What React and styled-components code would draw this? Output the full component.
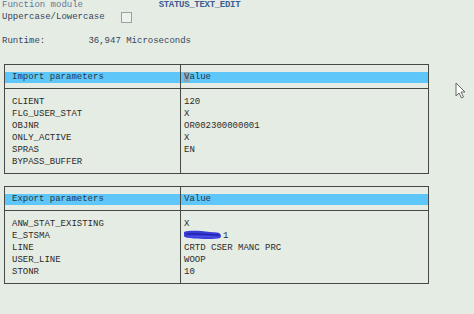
import React from 'react'
import styled, { createGlobalStyle } from 'styled-components'

const GlobalStyle = createGlobalStyle`
  html, body {
    margin: 0;
    padding: 0;
    background: #e5ece4;
  }
  body {
    width: 474px;
    height: 314px;
    overflow: hidden;
    font-family: "Liberation Mono", "Courier New", monospace;
    font-size: 9px;
    color: #2b2b2b;
  }
`

const importParams = [
  { name: 'CLIENT', value: '120' },
  { name: 'FLG_USER_STAT', value: 'X' },
  { name: 'OBJNR', value: 'OR002300000001' },
  { name: 'ONLY_ACTIVE', value: 'X' },
  { name: 'SPRAS', value: 'EN' },
  { name: 'BYPASS_BUFFER', value: '' },
]

const exportParams = [
  { name: 'ANW_STAT_EXISTING', value: 'X' },
  { name: 'E_STSMA', value: '1', hidden: true },
  { name: 'LINE', value: 'CRTD CSER MANC PRC' },
  { name: 'USER_LINE', value: 'WOOP' },
  { name: 'STONR', value: '10' },
]

// blue pen scribble hiding part of a value
function Scribble() {
  return (
    <svg width="39" height="10" viewBox="0 0 39 10" style={{ verticalAlign: '-2px' }}>
      <path d="M0 2 C6 0, 16 1, 26 2 L33 2.5 C37 3, 38 6, 36 8 C30 9.5, 18 9, 10 8.5 C5 8, 1 8, 0 6 Z" fill="#3a3ed8" />
      <path d="M2 4 C12 3, 22 5, 35 5" stroke="#2326a8" strokeWidth="1.4" fill="none" />
      <path d="M4 7 C14 6, 24 7, 33 7" stroke="#4d52ee" strokeWidth="1" fill="none" />
    </svg>
  )
}

function ParamTable({ title, rows, caret }) {
  return (
    <Table>
      <HeadRow>
        <HeadCell $first>
          <Band $first>{title}</Band>
        </HeadCell>
        <HeadCell>
          <Band>
            {caret ? <Caret>V</Caret> : 'V'}alue
          </Band>
        </HeadCell>
      </HeadRow>
      <Body>
        <Column $first>
          {rows.map((r) => (
            <Line key={r.name}>{r.name}</Line>
          ))}
        </Column>
        <Column>
          {rows.map((r) => (
            <Line key={r.name}>
              {r.hidden && <Scribble />}
              {r.value}
            </Line>
          ))}
        </Column>
      </Body>
    </Table>
  )
}

function Cursor() {
  return (
    <CursorMark width="12" height="17" viewBox="0 0 12 17">
      <path d="M1 1 L1 14 L4 11 L6.5 16 L8.5 15 L6 10 L10 10 Z" fill="#fff" stroke="#666" strokeWidth="1" strokeLinejoin="round" />
    </CursorMark>
  )
}

export default function App() {
  return (
    <Page>
      <GlobalStyle />
      <Header>
        <InfoRow>
          <Label $ch={29} $tone="#5f7898">Function module</Label>
          <ModuleName>STATUS_TEXT_EDIT</ModuleName>
        </InfoRow>
        <InfoRow>
          <Label $ch={22} $tone="#36445a">Uppercase/Lowercase</Label>
          <Check />
        </InfoRow>
        <InfoRow />
        <InfoRow>
          <Label $ch={16} $tone="#36445a">Runtime:</Label>
          <Value>36,947 Microseconds</Value>
        </InfoRow>
      </Header>
      <Tables>
        <ParamTable title="Import parameters" rows={importParams} caret />
        <ParamTable title="Export parameters" rows={exportParams} />
      </Tables>
      <Cursor />
    </Page>
  )
}

const Page = styled.div`
  position: relative;
  width: 474px;
  height: 314px;
  box-sizing: border-box;
  padding: 0 0 0 2px;
`

const Header = styled.div`
  margin-top: -1px;
  display: flex;
  flex-direction: column;
`

const InfoRow = styled.div`
  display: flex;
  align-items: center;
  height: 12px;
  line-height: 12px;
  white-space: pre;
`

const Label = styled.span`
  width: ${(p) => p.$ch}ch;
  flex: none;
  color: ${(p) => p.$tone};
`

const ModuleName = styled.span`
  color: #3d5c94;
  font-weight: bold;
  letter-spacing: -0.3px;
`

const Value = styled.span`
  color: #36445a;
`

const Check = styled.span`
  width: 9px;
  height: 9px;
  margin-top: 1px;
  border: 1px solid #9aa09a;
  background: #eef2ee;
  flex: none;
`

const Tables = styled.div`
  margin-top: 17px;
  margin-left: 2px;
  width: 425px;
  display: flex;
  flex-direction: column;
  gap: 12px;
`

const Table = styled.div`
  border: 1px solid #474947;
  display: flex;
  flex-direction: column;
`

const HeadRow = styled.div`
  display: grid;
  grid-template-columns: 176px 1fr;
  border-bottom: 1px solid #474947;
`

const HeadCell = styled.div`
  padding: 7px 0 5px;
  border-right: ${(p) => (p.$first ? '1px solid #474947' : 'none')};
`

const Band = styled.div`
  height: 11px;
  line-height: 11px;
  background: #5ec6f8;
  color: #263848;
  padding-left: ${(p) => (p.$first ? '7px' : '3px')};
  white-space: pre;
`

const Caret = styled.span`
  background: #8ea4b6;
`

const Body = styled.div`
  display: grid;
  grid-template-columns: 176px 1fr;
`

const Column = styled.div`
  padding: 7px 0 5px ${(p) => (p.$first ? '7px' : '3px')};
  border-right: ${(p) => (p.$first ? '1px solid #474947' : 'none')};
  display: flex;
  flex-direction: column;
`

const Line = styled.div`
  height: 12px;
  line-height: 12px;
  white-space: pre;
  color: #2b2b2b;
`

const CursorMark = styled.svg`
  position: absolute;
  left: 455px;
  top: 83px;
`
